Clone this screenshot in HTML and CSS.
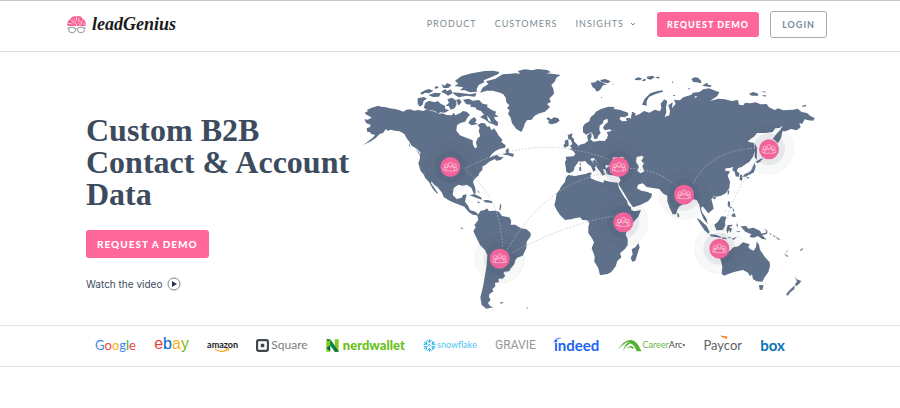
FILE: index.html
```html
<!DOCTYPE html>
<html lang="en">
<head>
<meta charset="utf-8">
<meta name="viewport" content="width=device-width, initial-scale=1">
<title>LeadGenius</title>
<link rel="stylesheet" href="styles.css">
</head>
<body>
<header class="header">
  <a class="brand" href="#">
    <svg class="brand-mark" viewBox="0 0 60 60" aria-hidden="true">
      <path fill="#fb6393" d="M2 35C-1 26 3 16 11 13C13 5 22 2 29 5C37 0 48 4 49 12C57 15 61 26 58 35Z"/>
      <path fill="none" stroke="#fff" stroke-width="2" d="M30 7v10l-6 4M12 16l7 3v7M38 9l-2 9 7 4M50 16l-5 6v8M3 27h10l5 5M23 25l7 4v6M35 25l6 5v5M20 12l4 3M50 28l6 1"/>
      <g fill="none" stroke="#777a7e" stroke-width="2.5"><ellipse cx="16" cy="47" rx="11" ry="9"/><ellipse cx="44" cy="47" rx="11" ry="9"/><path d="M26 44q4-4 8 0M1 41h6M53 41h6"/></g>
    </svg>
    <span class="brand-name">leadGenius</span>
  </a>
  <nav class="nav">
    <a href="#">PRODUCT</a>
    <a href="#">CUSTOMERS</a>
    <a href="#" class="nav-more">INSIGHTS
      <svg class="chevron" viewBox="0 0 6 4" aria-hidden="true"><path d="M1 1l2 2 2-2" fill="none" stroke="#7b8a93"/></svg>
    </a>
  </nav>
  <button class="button button-demo" type="button">REQUEST DEMO</button>
  <button class="button button-login" type="button">LOGIN</button>
</header>

<main>
  <section class="hero">
    <div class="pitch">
      <h1>Custom B2B Contact &amp; Account Data</h1>
      <button class="button button-main" type="button">REQUEST A DEMO</button>
      <a class="video" href="#">Watch the video
        <svg class="play" viewBox="0 0 14 14" aria-hidden="true"><circle cx="7" cy="7" r="6" fill="none" stroke="#79828f"/><path fill="#26394f" d="M5 4l5 3-5 3z"/></svg>
      </a>
    </div>
    <svg class="map" viewBox="0 0 1440 780" role="img" aria-label="World map of contact locations">
      <defs>
        <g id="pin">
          <circle r="74" fill="#345" fill-opacity=".04" stroke="#345" stroke-opacity=".06" stroke-width="2"/>
          <circle r="48" fill="#335" fill-opacity=".08"/>
          <circle r="30" fill="#f1639a"/>
          <g fill="none" stroke="#fff" stroke-opacity=".8" stroke-width="1.8">
            <circle cy="-8" r="6"/><circle cx="-13" cy="-4" r="5"/><circle cx="13" cy="-4" r="5"/>
            <path d="M-13 12v-5q1-7 8-8l5 4 5-4q7 1 8 8v5zM-13 10h-7v-4q0-5 5-6l4 2M13 10h7v-4q0-5-5-6l-4 2"/>
          </g>
        </g>
      </defs>
      <g class="land">
        <!-- North and Central America -->
        <path d="M28 178L38 179 50 173 42 168 32 163 30 157 38 155 36 150 48 144 55 142 70 137 78 140 90 141 104 145 120 147 132 150 145 155 154 149 165 148 178 152 190 150 205 153 215 148 228 152 240 155 250 162 262 160 275 165 290 166 296 158 301 166 315 160 324 153 335 155 345 165 338 172 330 185 316 189 306 196 304 212 315 226 328 231 342 236 353 241 354 254 360 265 366 262 363 246 368 235 376 228 371 213 374 203 368 195 378 189 389 190 397 200 404 199 409 211 417 205 423 213 432 228 442 239 439 246 452 256 450 263 435 266 421 273 410 283 403 293 414 288 426 284 434 291 446 290 437 300 424 302 420 297 405 304 391 315 383 319 382 330 373 339 371 346 358 358 354 366 361 385 362 400 357 402 349 383 335 374 323 377 310 374 296 384 293 405 305 417 320 413 324 405 335 403 330 425 339 437 345 450 360 455 370 463 355 465 341 456 328 440 305 431 285 423 266 411 260 397 248 382 236 373 230 364 228 370 238 383 250 401 244 399 232 385 222 366 210 353 207 345 197 333 190 310 195 295 194 284 197 278 185 266 170 257 162 244 155 235 148 222 134 214 120 212 106 209 98 213 93 207 84 219 74 222 63 233 48 244 25 255 38 245 56 231 60 224 48 222 45 216 37 216 35 205 45 201 47 194 34 190Z"/>
        <!-- Arctic islands -->
        <path d="M298 78L310 71 300 62 320 48 350 40 390 33 415 32 433 36 430 42 408 52 386 61 388 67 371 75 365 87 366 95 345 97 330 91 315 91 325 82ZM188 115L207 111 216 116 206 122 203 134 194 140 188 131ZM211 128L222 122 239 127 248 123 258 132 270 137 271 147 283 151 269 158 255 157 250 163 240 153 218 149 206 144ZM195 99L210 91 222 87 235 92 222 100 210 98 202 104ZM220 105L240 98 258 100 252 110 234 111ZM259 72L269 77 276 69 290 75 280 84 265 84ZM239 81L247 78 251 84 240 86ZM258 95L271 87 276 94 287 88 293 100 279 107 271 101ZM291 97L318 99 345 103 365 99 360 110 335 107 311 112 301 106ZM277 118L290 113 302 120 305 133 299 145 287 149 281 138 272 138 282 128ZM303 120L313 117 320 125 311 137ZM324 119L342 116 353 122 372 120 383 131 398 134 396 141 412 151 424 155 420 162 431 171 418 170 419 177 430 188 427 199 413 192 404 190 391 179 375 171 387 164 378 153 365 149 361 142 346 141 348 134 334 133ZM345 180L358 171 365 180 360 188 370 192 350 196 340 190ZM452 270L461 264 461 278 477 282 474 291 459 286 442 283 453 279ZM181 266L193 279 199 288 190 280ZM162 249l4 10 3 5-7-8z"/>
        <!-- Greenland and Iceland -->
        <path d="M375 98L383 83 400 72 393 64 421 56 443 43 480 40 496 41 488 33 510 28 532 31 548 27 577 30 588 37 574 40 597 42 617 45 604 53 600 64 589 75 595 86 597 101 583 116 588 125 576 132 585 141 570 155 550 161 538 168 530 179 516 181 510 190 505 204 499 216 484 207 471 190 467 173 459 161 464 150 456 145 463 136 454 127 452 113 445 103 435 98 413 92 395 92ZM574 176L580 172 588 178 597 172 610 175 614 182 603 190 588 193 579 188 582 182Z"/>
        <!-- Caribbean -->
        <path d="M344 406L358 402 378 412 381 419 365 414ZM385 421L399 420 413 425 411 429 389 427ZM366 424l10 3-6 3zM366 389l8 8-3 2zM316 502l10 3-6 2zM436 430l3 8-3 14-3-4z"/>
        <!-- South America -->
        <g transform="translate(225 375)"><path d="M120 78L135 80 144 89 152 77 165 75 170 70 177 78 195 77 207 80 216 93 238 97 244 108 242 119 256 119 273 130 290 133 302 144 302 154 290 170 289 190 278 212 262 218 256 225 253 237 243 249 237 259 223 260 220 265 226 272 218 281 205 281 207 292 195 293 196 304 187 312 190 319 178 328 177 337 182 344 174 354 180 363 190 367 169 371 155 360 151 337 156 318 160 300 165 270 170 240 172 210 165 195 150 180 140 160 130 139 137 127 133 120 145 105 142 92 126 86ZM210 352l11-1-8 6zM288 366l6 2-2 3z"/></g>
        <!-- Europe and Asia -->
        <g transform="translate(435 0)"><path fill-rule="evenodd" d="M195 305L199 299 197 290 220 289 226 283 222 275 212 268 222 266 232 262 240 254 256 250 260 245 265 243 262 234 262 226 274 217 275 230 271 238 280 245 299 242 314 243 321 235 324 225 320 217 336 212 329 208 315 211 309 204 313 196 324 186 322 176 311 181 309 189 299 197 298 209 302 219 295 227 291 237 282 236 280 226 274 216 258 224 249 217 249 200 254 192 268 184 272 171 283 163 287 156 301 148 325 140 345 141 340 146 361 150 384 158 385 166 374 172 363 170 358 176 366 184 381 183 377 175 389 173 392 178 396 155 407 160 405 167 419 162 432 153 448 158 465 149 480 154 484 144 482 131 493 118 502 124 498 140 499 157 494 171 508 166 510 152 505 136 518 127 516 145 527 131 522 119 540 121 550 112 572 105 580 98 598 96 610 88 627 85 642 91 658 97 652 108 630 123 655 116 675 118 695 123 714 120 717 134 730 136 735 128 751 130 767 127 782 133 800 132 807 142 825 150 834 145 850 151 879 149 893 146 905 156 921 159 931 168 944 174 940 182 925 181 914 178 907 191 898 190 902 202 890 211 873 207 857 214 847 214 844 232 834 250 824 240 818 237 831 220 840 211 848 197 838 204 826 205 818 216 797 219 771 219 762 230 750 238 743 245 762 249 765 271 759 290 748 305 738 312 725 321 715 324 710 332 719 341 716 351 707 349 704 335 697 331 699 321 689 324 677 325 675 332 690 334 683 347 690 365 688 385 677 400 663 407 650 410 642 409 634 418 638 432 641 446 625 460 620 454 608 439 603 444 606 457 619 475 623 492 611 478 603 458 598 435 590 420 580 418 566 416 554 430 537 440 533 448 528 463 518 463 509 444 502 424 502 407 490 401 478 387 454 383 440 381 428 370 414 374 411 385 424 392 440 395 456 401 454 412 444 424 422 434 399 442 390 429 377 408 366 390 355 372 362 360 355 348 330 345 320 342 316 328 324 320 335 317 316 315 318 327 308 328 316 343 308 347 299 333 289 321 276 303 284 300 298 316 281 294 271 296 277 307 292 321 284 321 287 331 280 335 273 319 262 311 256 303 244 305 236 304 230 313 224 321 221 333 208 340 199 336ZM374 292L360 290 350 303 340 306 338 293 350 291 360 297ZM410 291L425 287 431 291 424 303 432 310 427 319 433 334 422 340 412 333 417 320 408 305Z"/>
        <path d="M194 242L205 238 206 258 193 263 190 255 195 251ZM203 225L218 220 215 230 222 237 222 244 235 257 229 267 208 270 216 263 209 259 217 252 212 239 205 237ZM272 68L286 67 293 60 305 67 321 74 309 76 300 90 290 95 285 86 278 82ZM300 60L316 57 332 64 324 70 306 67ZM336 72l6-1-4 3zM303 112h3v2h-3zM403 57l12-5 11 3-5 6-14-1zM425 61l9-5 5 4-8 4zM440 50l18-3 6 5-12 7-10-3zM465 51l15-1-5 6zM426 134L434 116 451 100 470 94 487 91 489 95 465 103 447 111 440 124 440 137ZM574 57L583 52 594 53 604 63 603 70 590 67 580 66ZM607 76L622 68 625 75 635 76 632 81 613 79ZM747 101L760 96 775 101 774 107 755 107ZM782 93l16 2-3 3zM785 106l14 0-4 4zM906 137l11-3 2 5-12 1zM520 105h5v3h-5zM565 85h5v3h-5zM517 63l3 5-4 1zM765 250L771 265 770 300 764 292ZM766 305L780 298 790 294 781 305 772 309ZM763 309L767 321 761 338 749 341 739 350 726 350 739 340 750 337 758 321ZM719 353l9-1-2 10-6-2zM739 352l9-1-4 6zM260 340l14-3 0 7-8 1zM238 321l5-1 1 12-6 1zM238 309l5 1-2 8z"/></g>
        <!-- Africa and Madagascar -->
        <g transform="translate(570 360)"><path d="M35 40L43 31 47 22 60 5 63-8 70-15 90-12 120-18 135-20 137-5 155 2 175 8 177 1 195 5 218 8 222 25 238 52 246 62 249 74 258 82 259 91 268 94 288 90 280 110 262 130 245 150 242 165 248 177 248 195 240 207 225 220 229 232 217 243 212 259 199 276 188 282 165 286 160 265 148 245 149 229 140 205 147 187 140 173 130 160 130 140 133 130 127 121 112 120 105 112 90 115 78 118 60 120 45 105 35 90 28 75 32 60ZM260 208L271 202 280 189 284 202 278 220 271 242 262 245 257 234 263 223Z"/></g>
        <!-- Southeast Asia and Oceania -->
        <g transform="translate(915 345)"><path d="M51 114l6 3 1 9-5 1zM110 130L118 133 140 153 149 171 145 176 133 165 121 147ZM148 178L166 179 185 186 181 188 153 184ZM187 187l13 2-1 4-12-2zM202 188l11-2-3 4zM214 191l18-6-11 9zM163 149L174 140 184 124 199 125 195 140 196 153 188 165 169 166ZM203 150L218 149 216 154 207 155 216 162 212 173 207 164 203 176 199 164ZM229 145l5 5-3 8zM226 167l15 2-3 3zM204 78L211 82 209 94 218 99 212 100 203 93ZM218 98l5 9-4 4zM223 113l5 12-10 1-4-5zM200 103l-11 14 10-12zM203 48l5-3-1 11-4 4zM160 66l8-1-2 8-6-1zM240 0l7-1-2 9-6 8zM250 0l14-5 5-6h8l-4 9-12 3zM242 154L258 153 265 161 280 158 300 167 307 181 320 194 305 191 294 183 281 188 268 186 274 178 256 170 248 161ZM303 176l14-3 6-6-2 10-14 3zM311 160l12 8-3 2zM328 173l6 4-3 3zM336 178l10 7-3 2zM345 183l15 10-4 2zM370 235l15 8-3 3zM379 231l4-9-2 11zM420 225l8-6 1 3-7 6zM180 250L184 262 187 275 185 296 192 302 205 297 222 291 249 285 264 293 270 304 276 298 279 313 290 319 307 320 313 308 325 291 330 274 329 262 314 245 305 232 300 224 297 209 290 199 288 216 281 227 270 222 265 216 269 208 249 202 235 214 220 217 209 228 190 239ZM297 330L311 331 307 345 299 344ZM403 302L410 313 424 318 417 327 408 334 405 327 411 320ZM404 331L403 343 392 351 383 362 378 358 387 347Z"/></g>
      </g>
      <path fill="#fff" d="M396 166l8 10 5 12-10-7zM370 153l11 7-4 9-11 4-7-9zM1020 108l8 2-9 4z"/>
      <use href="#pin" x="286" y="321"/><use href="#pin" x="434" y="596"/><use href="#pin" x="792" y="321"/><use href="#pin" x="805" y="487"/><use href="#pin" x="987" y="404"/><use href="#pin" x="1242" y="268"/><use href="#pin" x="1093" y="566"/>
      <path class="routes" d="M330 325Q540 215 762 298M330 330Q438 410 443 564M457 570Q570 365 770 336M470 578Q640 490 776 468M825 325Q910 330 965 378M1015 370Q1070 265 1210 265M1225 295Q1135 370 1100 535"/>
    </svg>
  </section>

  <ul class="clients">
    <li class="client google"><span class="blue">G</span><span class="red">o</span><span class="yellow">o</span><span class="blue">g</span><span class="green">l</span><span class="red">e</span></li>
    <li class="client ebay"><span class="red">e</span><span class="sky">b</span><span class="yellow">a</span><span class="lime">y</span></li>
    <li class="client amazon">amazon<svg class="smile" viewBox="0 0 48 14" aria-hidden="true"><path d="M5 3q18 12 35 2M36 2l8 0-2 6" fill="none" stroke="#f90" stroke-width="3"/></svg></li>
    <li class="client square"><svg class="square-mark" viewBox="0 0 36 36" aria-hidden="true"><rect x="3" y="3" width="30" height="30" rx="5" fill="none" stroke="#3f464c" stroke-width="6"/><rect x="13" y="13" width="10" height="10" rx="1" fill="#3f464c"/></svg>Square</li>
    <li class="client nerdwallet"><svg class="nerd-mark" viewBox="0 0 40 40" aria-hidden="true"><path fill="#82c91e" d="M1 1h12l14 20V1h12v38H27L13 19v20H1z"/><path fill="#008254" d="M13 1l14 20v18L13 19z"/><path fill="#006747" d="M1 1h11L7 7zM1 28l12-9v19zM27 21l12 18H27z"/></svg>nerdwallet</li>
    <li class="client snowflake"><svg class="snow-mark" viewBox="-20 -20 40 40" aria-hidden="true"><g fill="none" stroke="#29b5e8" stroke-width="3" stroke-linecap="round"><path id="flake" d="M0-9v-9M-6-16l6 7 6-7"/><use href="#flake" transform="rotate(60)"/><use href="#flake" transform="rotate(120)"/><use href="#flake" transform="rotate(180)"/><use href="#flake" transform="rotate(240)"/><use href="#flake" transform="rotate(300)"/><path d="M0-3l3 3-3 3-3-3z"/></g></svg>snowflake</li>
    <li class="client gravie">GRAVIE</li>
    <li class="client indeed">indeed<svg class="indeed-arc" viewBox="0 0 27 18" aria-hidden="true"><path d="M2 17Q6 1 24 3Q9 4 2 17" fill="#2164f3" stroke="#2164f3"/></svg></li>
    <li class="client careerarc"><svg class="arc-mark" viewBox="0 0 72 38" aria-hidden="true"><path fill="#53b12f" d="M0 34Q22 0 40 3Q57 3 71 36H57Q48 12 37 13Q22 22 17 37Q23 11 37 7Q20 9 0 34ZM26 29Q38 14 49 25L46 29Q37 21 26 29Z"/></svg><span class="career">Career</span>Arc<sup>•</sup></li>
    <li class="client paycor">Paycor<svg class="paycor-wing" viewBox="0 0 24 14" aria-hidden="true"><path fill="#f58220" d="M0 1l22 3-2 8-6-4-6-1z"/></svg></li>
    <li class="client box">box</li>
  </ul>
</main>
</body>
</html>
```
FILE: styles.css
```css
* {
  box-sizing: border-box;
}

body {
  margin: 0;
  background: #fff;
  color: #3c4c5e;
  font-family: Lato, "Liberation Sans", sans-serif;
}

a {
  color: inherit;
  text-decoration: none;
}

.header {
  display: flex;
  align-items: center;
  height: 52px;
  padding: 0 73px 4px 67px;
  border-top: 1px solid #c6c6c6;
  border-bottom: 1px solid #ddd;
}

.brand {
  display: flex;
  align-items: center;
  gap: 6px;
  margin-right: auto;
  color: #1b1b1b;
}

.brand-mark {
  width: 19px;
  height: 19px;
}

.brand-name {
  font: italic bold 18px/24px "Liberation Serif", serif;
}

.nav {
  display: flex;
  gap: 18px;
  margin-right: 21px;
  color: #7b8a93;
  font-size: 9px;
  line-height: 12px;
  letter-spacing: 1px;
}

.nav-more {
  display: flex;
  align-items: center;
  gap: 6px;
}

.chevron {
  width: 6px;
  height: 4px;
}

.button {
  border: 0;
  border-radius: 3px;
  background: #ff6699;
  color: #fff;
  font-family: inherit;
  font-weight: 900;
  letter-spacing: 1px;
  white-space: nowrap;
}

.button-demo {
  padding: 0 10px;
  font-size: 9px;
  line-height: 25px;
}

.button-login {
  margin-left: 11px;
  padding: 0 11px;
  border: 1px solid #a5adb4;
  background: #fff;
  color: #7b8a93;
  font-size: 9px;
  font-weight: bold;
  line-height: 25px;
}

.hero {
  display: flex;
  align-items: flex-start;
  padding: 8px 65px 5px 86px;
}

.pitch {
  flex: 0 0 269px;
  padding-top: 54px;
}

h1 {
  margin: 0 0 20px;
  font: bold 32px/32px "Liberation Serif", serif;
}

.button-main {
  display: block;
  padding: 0 11px;
  font-size: 10px;
  line-height: 28px;
}

.video {
  display: flex;
  align-items: center;
  gap: 5px;
  margin-top: 18px;
  font-family: Inter, sans-serif;
  font-size: 10px;
  line-height: 16px;
}

.play {
  width: 14px;
  height: 14px;
}

.map {
  flex: 1;
  min-width: 0;
}

.land {
  fill: #5f708a;
}

.routes {
  fill: none;
  stroke: #b3bac6;
  stroke-width: 2;
  stroke-dasharray: 5 5;
}

.clients {
  display: flex;
  align-items: center;
  justify-content: space-between;
  height: 42px;
  margin: 0;
  padding: 0 115px 2px 95px;
  border-top: 1px solid #e3e3e3;
  border-bottom: 1px solid #e3e3e3;
  list-style: none;
}

.client {
  position: relative;
  display: flex;
  align-items: center;
  line-height: 20px;
}

.google {
  font-size: 13px;
}

.blue { color: #4285f4; }
.red { color: #ea4335; }
.yellow { color: #f9b316; }
.green { color: #34a853; }
.sky { color: #0064d2; }
.lime { color: #86b817; }

.ebay {
  padding-bottom: 3px;
  font: 16px/20px "Liberation Sans", sans-serif;
}

.amazon {
  color: #222;
  font-size: 9px;
  font-weight: bold;
}

.smile {
  position: absolute;
  top: 13px;
  left: 5px;
  width: 19px;
  height: 5px;
}

.square {
  gap: 2px;
  color: #777d82;
  font-size: 12px;
}

.square-mark {
  width: 13px;
  height: 13px;
}

.nerdwallet {
  gap: 4px;
  color: #6abf1a;
  font-size: 13px;
  font-weight: 900;
}

.nerd-mark {
  width: 13px;
  height: 13px;
}

.snowflake {
  gap: 1px;
  color: #4cc3f0;
  font-size: 9px;
}

.snow-mark {
  width: 13px;
  height: 13px;
}

.gravie {
  color: #969696;
  font-family: Roboto, sans-serif;
  font-size: 12px;
}

.indeed {
  color: #2164f3;
  font-size: 15px;
  font-weight: bold;
}

.indeed-arc {
  position: absolute;
  top: 2px;
  left: -1px;
  width: 9px;
  height: 6px;
}

.careerarc {
  color: #4b4b4b;
  font-size: 9px;
}

.career {
  color: #69b84a;
}

.careerarc sup {
  font-size: 5px;
  line-height: 5px;
}

.arc-mark {
  width: 25px;
  height: 13px;
}

.paycor {
  color: #5b5f66;
  font-size: 13px;
}

.paycor-wing {
  position: absolute;
  top: 0;
  left: 17px;
  width: 8px;
  height: 5px;
}

.box {
  color: #0b72b9;
  font-size: 15px;
  font-weight: bold;
}
```
